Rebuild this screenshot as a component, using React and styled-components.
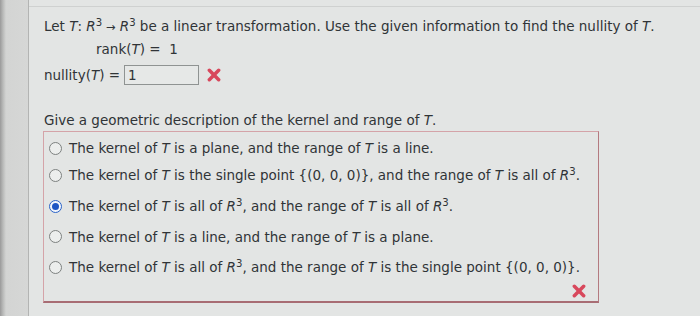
import React from 'react';
import styled, { createGlobalStyle } from 'styled-components';

const GlobalStyle = createGlobalStyle`
  html, body {
    margin: 0;
    padding: 0;
    background: #e3e5e4;
  }
  body {
    font-family: "DejaVu Sans", Verdana, sans-serif;
    color: #303437;
  }
`;

const Page = styled.div`
  display: flex;
  width: 700px;
  height: 316px;
  overflow: hidden;
  background: #e3e5e4;
`;

const Strip = styled.div`
  width: 28px;
  flex-shrink: 0;
  background: linear-gradient(to right, #9a9a9a 0, #b9bab9 3px, #d3d4d3 6px, #d6d7d6 100%);
  border-right: 1px solid #b3b4b3;
`;

const Main = styled.div`
  flex: 1;
  margin-top: 6px;
  border-top: 1px solid #cfd1d0;
  padding: 9px 0 0 15px;
  font-size: 13.5px;
`;

const Line = styled.div`
  display: flex;
  align-items: center;
  height: ${({ h }) => h || 22}px;
  padding-left: ${({ indent }) => indent || 0}px;
  white-space: nowrap;
`;

const I = styled.i`
  font-style: italic;
`;

const Sup = styled.sup`
  font-size: 0.75em;
  line-height: 0;
  vertical-align: 0.5em;
`;

const Arrow = styled.span`
  font-size: 0.85em;
  margin: 0 4px;
`;

const AnswerBox = styled.div`
  width: 75px;
  height: 20px;
  margin-left: 4px;
  border: 1px solid #8f9392;
  background: #e6e8e7;
  box-sizing: border-box;
  padding-left: 3px;
  display: flex;
  align-items: center;
`;

const Cross = ({ size = 14 }) => (
  <svg width={size} height={size} viewBox="0 0 12 12">
    <path d="M2 2 L10 10 M10 2 L2 10" stroke="#d8485c" strokeWidth="3" strokeLinecap="round" />
  </svg>
);

const CrossWrap = styled.span`
  display: inline-flex;
  margin-left: 8px;
`;

const Question = styled.div`
  margin-top: 20px;
  height: 22px;
  display: flex;
  align-items: center;
  white-space: nowrap;
`;

const Choices = styled.div`
  width: 556px;
  height: 172px;
  box-sizing: border-box;
  margin-left: -1px;
  border: 1px solid #d4a3a8;
  border-bottom: 2px solid #a86d74;
  border-right: 1.5px solid #b47a80;
  padding: 4px 0 0 5px;
  display: flex;
  flex-direction: column;
  position: relative;
`;

const Option = styled.label`
  display: flex;
  align-items: center;
  height: 30.7px;
  white-space: nowrap;
  &:first-child {
    height: 24px;
  }
`;

const Radio = styled.span`
  width: 13px;
  height: 13px;
  flex-shrink: 0;
  border-radius: 50%;
  box-sizing: border-box;
  border: 1.3px solid ${({ checked }) => (checked ? '#2a63c8' : '#7d8180')};
  background: ${({ checked }) => (checked ? '#f2f5fb' : '#eceeed')};
  margin-right: 7px;
  display: flex;
  align-items: center;
  justify-content: center;
  &::after {
    content: '';
    display: ${({ checked }) => (checked ? 'block' : 'none')};
    width: 7px;
    height: 7px;
    border-radius: 50%;
    background: #1d55c4;
  }
`;

const BoxCross = styled.span`
  position: absolute;
  right: 12px;
  bottom: 0px;
`;

const R3 = () => (
  <>
    <I>R</I>
    <Sup>3</Sup>
  </>
);

const options = [
  <>The kernel of <I>T</I> is a plane, and the range of <I>T</I> is a line.</>,
  <>The kernel of <I>T</I> is the single point {'{'}(0, 0, 0){'}'}, and the range of <I>T</I> is all of <R3 />.</>,
  <>The kernel of <I>T</I> is all of <R3 />, and the range of <I>T</I> is all of <R3 />.</>,
  <>The kernel of <I>T</I> is a line, and the range of <I>T</I> is a plane.</>,
  <>The kernel of <I>T</I> is all of <R3 />, and the range of <I>T</I> is the single point {'{'}(0, 0, 0){'}'}.</>,
];

export default function App() {
  return (
    <Page>
      <GlobalStyle />
      <Strip />
      <Main>
        <Line h={20}>
          <span>
            Let <I>T</I>: <R3 />
            <Arrow>→</Arrow>
            <R3 /> be a linear transformation. Use the given information to find the nullity of <I>T</I>.
          </span>
        </Line>
        <Line h={25} indent={52}>
          <span>
            rank(<I>T</I>) = &nbsp;1
          </span>
        </Line>
        <Line h={28}>
          <span>
            nullity(<I>T</I>) =
          </span>
          <AnswerBox>1</AnswerBox>
          <CrossWrap>
            <Cross />
          </CrossWrap>
        </Line>
        <Question>
          <span>
            Give a geometric description of the kernel and range of <I>T</I>.
          </span>
        </Question>
        <Choices>
          {options.map((o, i) => (
            <Option key={i}>
              <Radio checked={i === 2} />
              <span>{o}</span>
            </Option>
          ))}
          <BoxCross>
            <Cross />
          </BoxCross>
        </Choices>
      </Main>
    </Page>
  );
}
